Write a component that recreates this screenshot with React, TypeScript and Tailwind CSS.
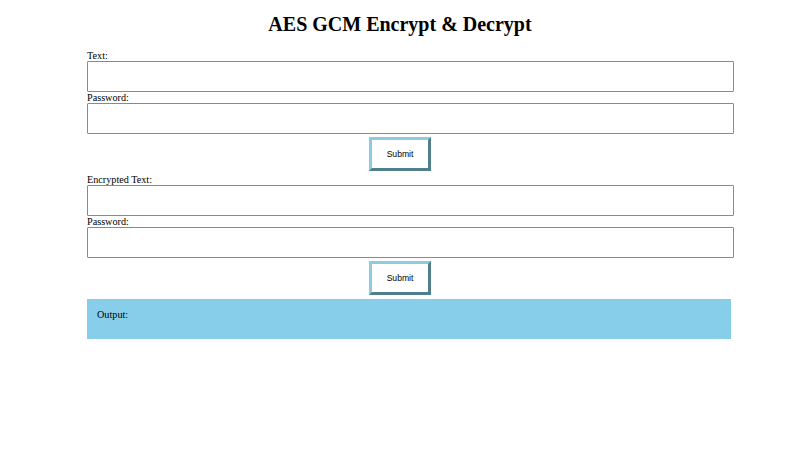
export default function App() {
  const serif = { fontFamily: '"Liberation Serif", "Times New Roman", serif' };

  const Field = ({ label }: { label: string }) => (
    <>
      <label className="block text-[10.2px] leading-[11px] text-black">{label}</label>
      <input
        type="text"
        className="block w-[647px] h-[31px] border border-[#8a8a8a] rounded-[1px] bg-white outline-none"
      />
    </>
  );

  // centred on the page, not on the form column
  const SubmitButton = () => (
    <div className="flex justify-center w-[626px] py-[3px]">
      <button
        className="w-[62px] h-[34px] bg-white border-[3px] border-t-[#8ccbe0] border-l-[#8ccbe0] border-b-[#4f7f8c] border-r-[#4f7f8c] text-[8.6px] text-black"
        style={{ fontFamily: '"Liberation Sans", Arial, sans-serif' }}
      >
        Submit
      </button>
    </div>
  );

  return (
    <div className="w-[800px] h-[450px] bg-white text-black" style={serif}>
      <h1 className="pt-[13px] pb-[14px] text-center text-[20px] leading-[23px] font-bold">
        AES GCM Encrypt &amp; Decrypt
      </h1>
      <div className="ml-[87px] w-[647px]">
        {/* Encrypt */}
        <Field label="Text:" />
        <Field label="Password:" />
        <SubmitButton />

        {/* Decrypt */}
        <Field label="Encrypted Text:" />
        <Field label="Password:" />
        <SubmitButton />

        {/* Result */}
        <div className="mt-[1px] w-[644px] h-[40px] bg-[#87ceeb] pt-[10px] pl-[10px] text-[10.2px] leading-[11px]">
          Output:
        </div>
      </div>
    </div>
  );
}
